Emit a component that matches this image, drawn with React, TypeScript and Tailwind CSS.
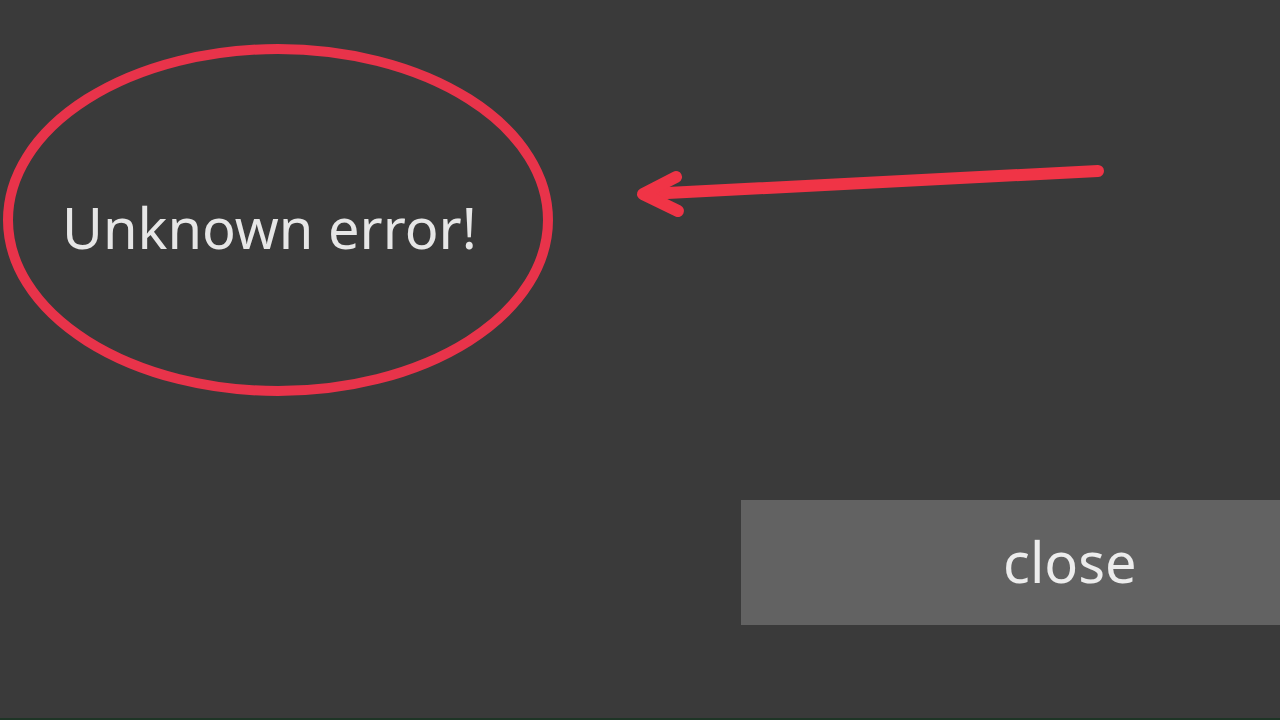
export default function App() {
  return (
    <div className="relative w-[1280px] h-[720px] overflow-hidden bg-[#3a3a3a] flex flex-col" style={{ fontFamily: '"Noto Sans", "Open Sans", sans-serif' }}>
      <div className="pl-[62px] pt-[187px] text-[56px] leading-[80px] text-[#e6e6e6]">Unknown error!</div>
      <div className="flex-1" />
      <div className="flex justify-end mb-[93px]">
        <button className="w-[539px] h-[125px] bg-[#626262] text-[#ececec] text-[56px] text-left pl-[262px] pb-[4px]">close</button>
      </div>
      <div className="h-[2px] bg-[#1e3526]" />

      <svg className="absolute inset-0 pointer-events-none" width="1280" height="720" viewBox="0 0 1280 720">
        <ellipse cx="278" cy="220" rx="270" ry="171" fill="none" stroke="#e8334a" strokeWidth="10" />
        <g stroke="#f03446" strokeWidth="12" strokeLinecap="round" strokeLinejoin="round" fill="none">
          <line x1="1098" y1="171" x2="648" y2="194" />
          <polyline points="676,177 643,194 678,211" />
        </g>
      </svg>
    </div>
  );
}
